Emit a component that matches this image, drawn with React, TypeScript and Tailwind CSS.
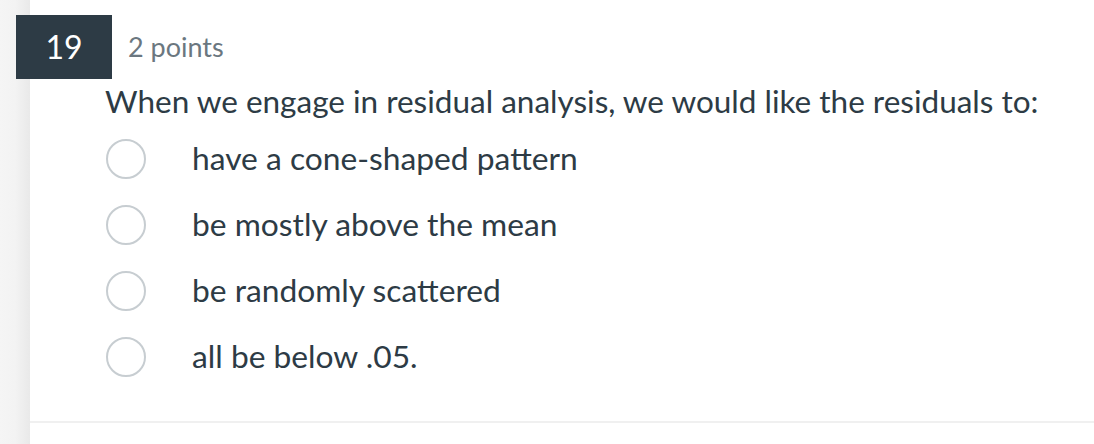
import React from "react";

const options = [
  "have a cone-shaped pattern",
  "be mostly above the mean",
  "be randomly scattered",
  "all be below .05.",
];

export default function App() {
  return (
    <div
      className="flex min-h-[444px] w-full bg-white text-[#2d3b45]"
      style={{ fontFamily: "Lato, 'Noto Sans', sans-serif" }}
    >
      <div className="w-[30px] shrink-0 bg-gradient-to-r from-[#f5f5f5] via-[#f3f3f3] to-[#e9e9e9]" />
      <div className="flex-1 flex flex-col">
        <div className="pt-[15px] flex items-center">
          <div className="-ml-[14px] w-[96px] h-[64px] bg-[#2d3b45] flex items-center justify-center text-white text-[32px]">
            19
          </div>
          <span className="ml-4 text-[#6b7780] text-[27px]">2 points</span>
        </div>
        <div className="mt-[2px] pl-[75px] text-[31.5px] leading-[40px]">
          When we engage in residual analysis, we would like the residuals to:
        </div>
        <div className="mt-[5px] pl-[76px] flex flex-col">
          {options.map((o) => (
            <div key={o} className="h-[66px] flex items-center">
              <span className="w-[40px] h-[40px] rounded-full border-2 border-[#c7cdd1] bg-white shrink-0" />
              <span className="ml-[46px] text-[31.75px]">{o}</span>
            </div>
          ))}
        </div>
        <div className="mt-[31px] h-[2px] bg-[#f0f0f0]" />
      </div>
    </div>
  );
}
